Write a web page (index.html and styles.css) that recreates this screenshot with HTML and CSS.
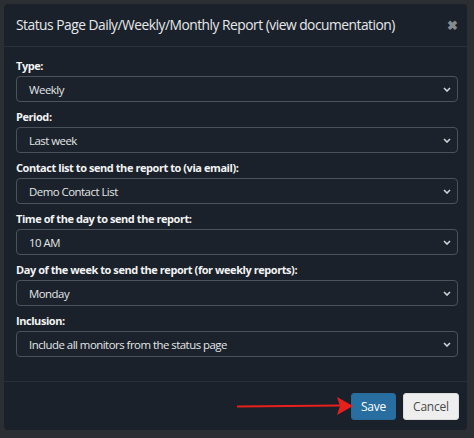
FILE: index.html
```html
<!DOCTYPE html>
<html>
<head>
<meta charset="utf-8">
<link rel="stylesheet" href="styles.css">
</head>
<body>
<div class="modal">
  <div class="modal-header">
    <span class="title">Status Page Daily/Weekly/Monthly Report (view documentation)</span>
    <span class="close">&#x2716;</span>
  </div>
  <div class="modal-body">
    <div class="group">
      <label>Type:</label>
      <div class="select"><span>Weekly</span><svg class="chev" viewBox="0 0 8 5" width="8" height="5"><path d="M1 1 L4 4 L7 1" fill="none" stroke="#d0d3d6" stroke-width="1.6"/></svg></div>
    </div>
    <div class="group">
      <label>Period:</label>
      <div class="select"><span>Last week</span><svg class="chev" viewBox="0 0 8 5" width="8" height="5"><path d="M1 1 L4 4 L7 1" fill="none" stroke="#d0d3d6" stroke-width="1.6"/></svg></div>
    </div>
    <div class="group">
      <label>Contact list to send the report to (via email):</label>
      <div class="select"><span>Demo Contact List</span><svg class="chev" viewBox="0 0 8 5" width="8" height="5"><path d="M1 1 L4 4 L7 1" fill="none" stroke="#d0d3d6" stroke-width="1.6"/></svg></div>
    </div>
    <div class="group">
      <label>Time of the day to send the report:</label>
      <div class="select"><span>10 AM</span><svg class="chev" viewBox="0 0 8 5" width="8" height="5"><path d="M1 1 L4 4 L7 1" fill="none" stroke="#d0d3d6" stroke-width="1.6"/></svg></div>
    </div>
    <div class="group">
      <label>Day of the week to send the report (for weekly reports):</label>
      <div class="select"><span>Monday</span><svg class="chev" viewBox="0 0 8 5" width="8" height="5"><path d="M1 1 L4 4 L7 1" fill="none" stroke="#d0d3d6" stroke-width="1.6"/></svg></div>
    </div>
    <div class="group">
      <label>Inclusion:</label>
      <div class="select"><span>Include all monitors from the status page</span><svg class="chev" viewBox="0 0 8 5" width="8" height="5"><path d="M1 1 L4 4 L7 1" fill="none" stroke="#d0d3d6" stroke-width="1.6"/></svg></div>
    </div>
  </div>
  <div class="modal-footer">
    <svg class="arrow" viewBox="0 0 117 22" width="117" height="22">
      <line x1="0" y1="11.5" x2="104" y2="10.5" stroke="#e8201c" stroke-width="2.2"/>
      <polygon points="100,2 116,11 100,20 103,11" fill="#e8201c"/>
    </svg>
    <button class="btn btn-save">Save</button>
    <button class="btn btn-cancel">Cancel</button>
  </div>
</div>
</body>
</html>
```
FILE: styles.css
```css
html, body {
  margin: 0;
  padding: 0;
}
body {
  background: #2b2e33;
  width: 474px;
  height: 438px;
  overflow: hidden;
  font-family: "Open Sans", "Noto Sans", sans-serif;
  padding: 4px 0 0 4px;
  box-sizing: border-box;
}
.modal {
  width: 463px;
  height: 426px;
  background: #1a212a;
  border-radius: 4px;
  box-sizing: border-box;
  display: flex;
  flex-direction: column;
}
.modal-header {
  height: 43px;
  box-sizing: border-box;
  border-bottom: 1px solid #2a313a;
  display: flex;
  align-items: center;
  justify-content: space-between;
  padding: 0 9px 1px 12px;
}
.title {
  color: #e6e8ea;
  font-size: 13.8px;
  letter-spacing: -0.5px;
}
.close {
  color: #868b92;
  font-size: 13px;
  font-weight: bold;
  margin-top: 0;
  margin-right: 0;
}
.modal-body {
  padding: 10px 9px 0 12px;
  height: 335px;
  box-sizing: border-box;
  border-bottom: 1px solid #29303a;
}
.group {
  margin-bottom: 6px;
}
label {
  display: block;
  color: #f2f3f4;
  font-weight: bold;
  font-size: 11px;
  letter-spacing: -0.44px;
  line-height: 17px;
  margin-bottom: 2px;
}
.select {
  height: 26px;
  box-sizing: border-box;
  border: 1px solid #4a525c;
  border-radius: 4px;
  background: #1b222b;
  display: flex;
  align-items: center;
  justify-content: space-between;
  padding: 0 6px 0 12px;
  color: #e4e6e8;
  font-size: 11.4px;
  letter-spacing: -0.5px;
}
.chev {
  display: block;
}
.modal-footer {
  flex: 1;
  display: flex;
  justify-content: flex-end;
  align-items: flex-start;
  padding: 11px 8px 0 0;
}
.arrow {
  display: block;
  margin-top: 2px;
  margin-right: -3px;
  position: relative;
  z-index: 1;
}
.btn {
  height: 27px;
  box-sizing: border-box;
  border-radius: 3px;
  font-family: "Open Sans", "Noto Sans", sans-serif;
  font-size: 12px;
  letter-spacing: -0.2px;
  padding: 0;
  border: 1px solid transparent;
}
.btn-save {
  width: 45px;
  background: #286ea1;
  color: #ffffff;
  border-color: #2a6a98;
  margin-right: 7px;
}
.btn-cancel {
  width: 56px;
  background: #eeeeee;
  color: #4a4a4a;
  border-color: #dcdcdc;
}
```
